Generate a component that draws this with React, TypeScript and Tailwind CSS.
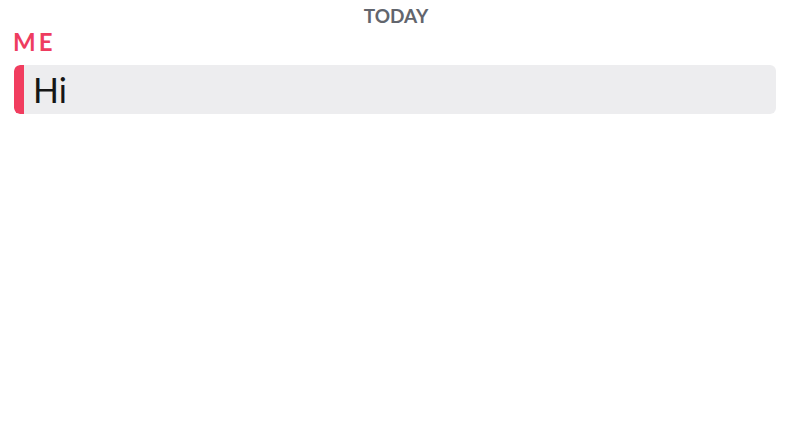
import React from 'react';

export default function App() {
  return (
    <div className="w-[792px] h-[434px] bg-white font-['Lato','Noto_Sans',sans-serif] pt-[4px]">
      <div className="text-center text-[19px] font-bold text-[#62656d] leading-[24px]">TODAY</div>
      <div className="px-[13px]">
        <div className="text-[24px] font-bold tracking-[3px] text-[#ee3c5f] leading-[28px]">ME</div>
        <div className="mt-[9px] mr-[3px] flex h-[49px] rounded-[6px] bg-[#ededef] overflow-hidden ml-[1px]">
          <div className="w-[10px] bg-[#f13d5f] rounded-l-[6px]" />
          <div className="pl-[9px] flex items-center text-[34px] text-[#161616] leading-none">Hi</div>
        </div>
      </div>
    </div>
  );
}
